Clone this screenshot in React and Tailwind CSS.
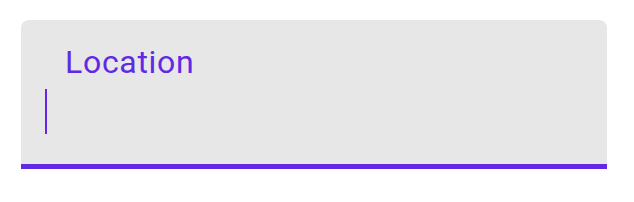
export default function App() {
  return (
    <div className="min-h-[202px] bg-white pl-[21px] pt-[20px]" style={{ fontFamily: 'Roboto, "Noto Sans", sans-serif' }}>
      <div className="flex h-[149px] w-[586px] flex-col rounded-t-[8px] border-b-[5px] border-[#6129e6] bg-[#e7e7e7]">
        <div className="pl-[44px] pt-[22px] text-[32px] leading-[40px] tracking-[0.7px] text-[#6129e6]">
          Location
        </div>
        <div className="pl-[24px] pt-[7px]">
          <div className="h-[45px] w-[2px] bg-[#6129e6]" />
        </div>
      </div>
    </div>
  )
}
